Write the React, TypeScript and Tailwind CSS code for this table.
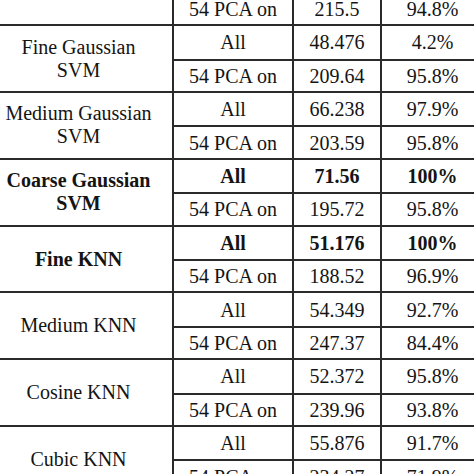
type Row = { method: string; time: string; acc: string; bold?: boolean };
type Group = { label: string[]; bold?: boolean; rows: [Row, Row] };

const groups: Group[] = [
  {
    label: ["Cubic SVM"],
    rows: [
      { method: "All", time: "60.12", acc: "95.8%" },
      { method: "54 PCA on", time: "215.5", acc: "94.8%" },
    ],
  },
  {
    label: ["Fine Gaussian", "SVM"],
    rows: [
      { method: "All", time: "48.476", acc: "4.2%" },
      { method: "54 PCA on", time: "209.64", acc: "95.8%" },
    ],
  },
  {
    label: ["Medium Gaussian", "SVM"],
    rows: [
      { method: "All", time: "66.238", acc: "97.9%" },
      { method: "54 PCA on", time: "203.59", acc: "95.8%" },
    ],
  },
  {
    label: ["Coarse Gaussian", "SVM"],
    bold: true,
    rows: [
      { method: "All", time: "71.56", acc: "100%", bold: true },
      { method: "54 PCA on", time: "195.72", acc: "95.8%" },
    ],
  },
  {
    label: ["Fine KNN"],
    bold: true,
    rows: [
      { method: "All", time: "51.176", acc: "100%", bold: true },
      { method: "54 PCA on", time: "188.52", acc: "96.9%" },
    ],
  },
  {
    label: ["Medium KNN"],
    rows: [
      { method: "All", time: "54.349", acc: "92.7%" },
      { method: "54 PCA on", time: "247.37", acc: "84.4%" },
    ],
  },
  {
    label: ["Cosine KNN"],
    rows: [
      { method: "All", time: "52.372", acc: "95.8%" },
      { method: "54 PCA on", time: "239.96", acc: "93.8%" },
    ],
  },
  {
    label: ["Cubic KNN"],
    rows: [
      { method: "All", time: "55.876", acc: "91.7%" },
      { method: "54 PCA on", time: "234.27", acc: "71.9%" },
    ],
  },
];

const SubRow = ({ row, first }: { row: Row; first: boolean }) => (
  <div
    className={
      "flex " +
      (first ? "h-[34.4px] border-b-2 border-[#2a2a2a]" : "flex-1") +
      (row.bold ? " font-bold" : "")
    }
  >
    <div className="w-[120px] border-r-2 border-[#2a2a2a] flex items-center justify-center">
      {row.method}
    </div>
    <div className="w-[88px] border-r-2 border-[#2a2a2a] flex items-center justify-center">
      {row.time}
    </div>
    <div className="flex-1 border-r-2 border-[#2a2a2a] flex items-center justify-center">
      {row.acc}
    </div>
  </div>
);

export default function App() {
  return (
    <div
      className="w-[474px] h-[474px] overflow-hidden bg-white text-[#141414] text-[20px]"
      style={{ fontFamily: '"Liberation Serif", "Times New Roman", serif' }}
    >
      <div className="w-[500px] ml-[-15px] mt-[-40.5px] flex flex-col">
        {groups.map((g, i) => (
          <div
            key={i}
            className="flex h-[66.8px] shrink-0 border-b-2 border-[#2a2a2a]"
          >
            <div
              className={
                "w-[189px] border-r-2 border-[#2a2a2a] flex flex-col items-center justify-center leading-[23px] text-center" +
                (g.bold ? " font-bold" : "")
              }
            >
              {g.label.map((l) => (
                <span key={l}>{l}</span>
              ))}
            </div>
            <div className="flex-1 flex flex-col">
              <SubRow row={g.rows[0]} first />
              <SubRow row={g.rows[1]} first={false} />
            </div>
          </div>
        ))}
      </div>
    </div>
  );
}
